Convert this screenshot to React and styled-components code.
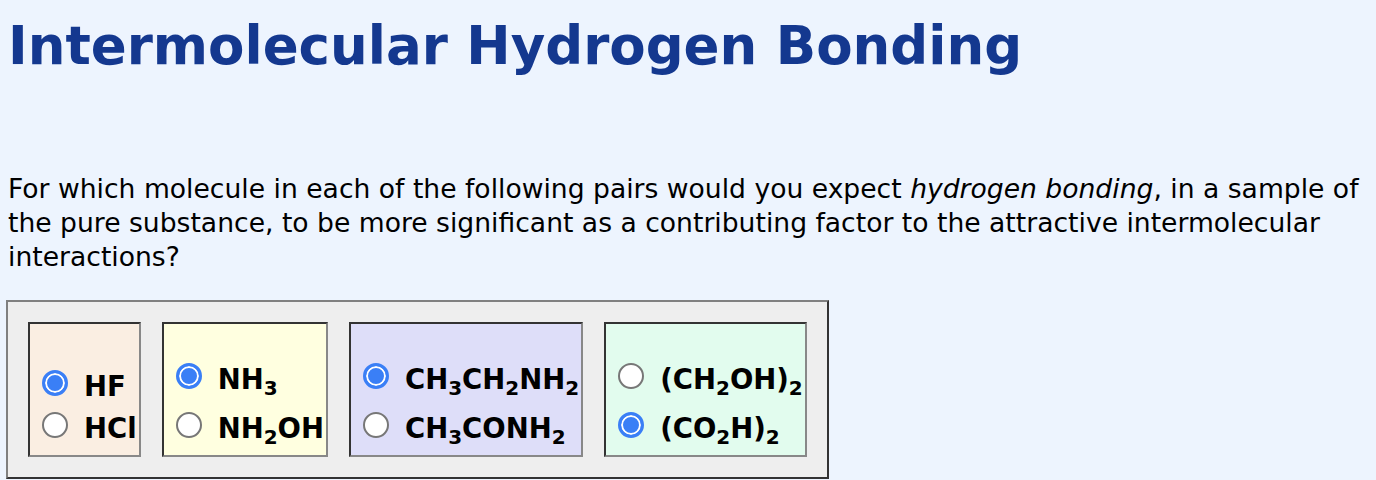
import React from 'react';
import styled, { createGlobalStyle } from 'styled-components';

const GlobalStyle = createGlobalStyle`
  html, body {
    margin: 0;
    background: #edf4fe;
  }
  body {
    padding: 8px;
    font-family: "DejaVu Sans", Verdana, sans-serif;
    color: #000;
  }
`;

const Title = styled.h1`
  margin: 0;
  padding-top: 6px;
  font-size: 53px;
  line-height: 64px;
  font-weight: bold;
  color: #14388f;
`;

const Question = styled.p`
  margin: 94px 0 0;
  font-size: 26.6px;
  line-height: 34px;
  em { font-style: italic; }
`;

const Panel = styled.div`
  display: inline-flex;
  gap: 21px;
  margin-top: 26px;
  margin-left: -2px;
  padding: 20px;
  background: #eeeeee;
  border: 2px solid;
  border-color: #808080 #333 #333 #808080;
`;

const Pair = styled.div`
  display: flex;
  flex-direction: column;
  justify-content: center;
  box-sizing: border-box;
  height: 135px;
  padding: 34px 2px 0 12px;
  background: ${p => p.$bg};
  border: 2px solid;
  border-color: #333 #888 #888 #333;
`;

const Option = styled.label`
  display: block;
  white-space: nowrap;
  font-size: 27.5px;
  line-height: 42px;
  font-weight: bold;
  sub {
    font-size: 20px;
    line-height: 37px;
    vertical-align: -6px;
  }
`;

const Radio = styled.span`
  display: inline-block;
  box-sizing: border-box;
  width: 26px;
  height: 26px;
  margin-right: 16px;
  border-radius: 50%;
  background: ${p => (p.$on ? '#3a7ff6' : '#fff')};
  border: ${p => (p.$on ? '3px solid #3a7ff6' : '2px solid #777')};
  box-shadow: ${p => (p.$on ? 'inset 0 0 0 2px #fff' : 'none')};
`;

const pairs = [
  { bg: '#faeee2', pick: 0, items: [<>HF</>, <>HCl</>] },
  { bg: '#ffffe0', pick: 0, items: [<>NH<sub>3</sub></>, <>NH<sub>2</sub>OH</>] },
  {
    bg: '#dedef9',
    pick: 0,
    items: [
      <>CH<sub>3</sub>CH<sub>2</sub>NH<sub>2</sub></>,
      <>CH<sub>3</sub>CONH<sub>2</sub></>,
    ],
  },
  {
    bg: '#e2fcee',
    pick: 1,
    items: [<>(CH<sub>2</sub>OH)<sub>2</sub></>, <>(CO<sub>2</sub>H)<sub>2</sub></>],
  },
];

export default function App() {
  return (
    <>
      <GlobalStyle />
      <Title>Intermolecular Hydrogen Bonding</Title>
      <Question>
        For which molecule in each of the following pairs would you expect{' '}
        <em>hydrogen bonding</em>, in a sample of the pure substance, to be more
        significant as a contributing factor to the attractive intermolecular
        interactions?
      </Question>
      <Panel>
        {pairs.map((pair, i) => (
          <Pair key={i} $bg={pair.bg}>
            {pair.items.map((item, j) => (
              <Option key={j}>
                <Radio $on={pair.pick === j} />
                {item}
              </Option>
            ))}
          </Pair>
        ))}
      </Panel>
    </>
  );
}
